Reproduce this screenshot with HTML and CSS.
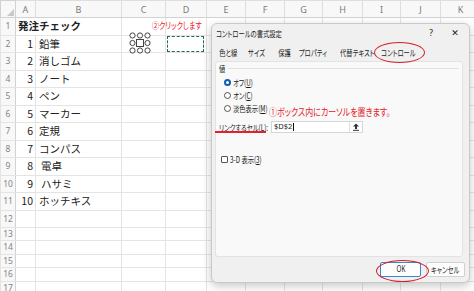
FILE: index.html
```html
<!DOCTYPE html>
<html lang="ja">
<head>
<meta charset="utf-8">
<link rel="stylesheet" href="styles.css">
</head>
<body>
<table class="sheet">
  <colgroup>
    <col class="c-rn"><col class="c-a"><col class="c-b"><col class="c-c"><col class="c-d"><col class="c-e"><col class="c-f"><col class="c-g"><col class="c-h"><col class="c-i"><col class="c-j"><col class="c-k">
  </colgroup>
  <tr class="h0"><td class="corner"><span class="tri"></span></td><td class="hd">A</td><td class="hd">B</td><td class="hd">C</td><td class="hd">D</td><td class="hd">E</td><td class="hd">F</td><td class="hd">G</td><td class="hd">H</td><td class="hd">I</td><td class="hd">J</td><td class="hd">K</td></tr>
  <tr class="r"><td class="rn">1</td><td class="title-cell">発注チェック</td><td class="after-title"></td><td></td><td></td><td></td><td></td><td></td><td></td><td></td><td></td><td></td></tr>
  <tr class="r"><td class="rn">2</td><td class="num">1</td><td class="item">鉛筆</td><td></td><td class="linked"><div class="ants"></div></td><td></td><td></td><td></td><td></td><td></td><td></td><td></td></tr>
  <tr class="r"><td class="rn">3</td><td class="num">2</td><td class="item">消しゴム</td><td></td><td></td><td></td><td></td><td></td><td></td><td></td><td></td><td></td></tr>
  <tr class="r"><td class="rn">4</td><td class="num">3</td><td class="item">ノート</td><td></td><td></td><td></td><td></td><td></td><td></td><td></td><td></td><td></td></tr>
  <tr class="r"><td class="rn">5</td><td class="num">4</td><td class="item">ペン</td><td></td><td></td><td></td><td></td><td></td><td></td><td></td><td></td><td></td></tr>
  <tr class="r"><td class="rn">6</td><td class="num">5</td><td class="item">マーカー</td><td></td><td></td><td></td><td></td><td></td><td></td><td></td><td></td><td></td></tr>
  <tr class="r"><td class="rn">7</td><td class="num">6</td><td class="item">定規</td><td></td><td></td><td></td><td></td><td></td><td></td><td></td><td></td><td></td></tr>
  <tr class="r"><td class="rn">8</td><td class="num">7</td><td class="item">コンパス</td><td></td><td></td><td></td><td></td><td></td><td></td><td></td><td></td><td></td></tr>
  <tr class="r"><td class="rn">9</td><td class="num">8</td><td class="item ind">電卓</td><td></td><td></td><td></td><td></td><td></td><td></td><td></td><td></td><td></td></tr>
  <tr class="r"><td class="rn">10</td><td class="num">9</td><td class="item ind">ハサミ</td><td></td><td></td><td></td><td></td><td></td><td></td><td></td><td></td><td></td></tr>
  <tr class="r"><td class="rn">11</td><td class="num">10</td><td class="item">ホッチキス</td><td></td><td></td><td></td><td></td><td></td><td></td><td></td><td></td><td></td></tr>
  <tr class="r"><td class="rn">12</td><td></td><td></td><td></td><td></td><td></td><td></td><td></td><td></td><td></td><td></td><td></td></tr>
  <tr class="s"><td class="rn">13</td><td></td><td></td><td></td><td></td><td></td><td></td><td></td><td></td><td></td><td></td><td></td></tr>
  <tr class="s"><td class="rn">14</td><td></td><td></td><td></td><td></td><td></td><td></td><td></td><td></td><td></td><td></td><td></td></tr>
  <tr class="s"><td class="rn">15</td><td></td><td></td><td></td><td></td><td></td><td></td><td></td><td></td><td></td><td></td><td></td></tr>
  <tr class="s"><td class="rn">16</td><td></td><td></td><td></td><td></td><td></td><td></td><td></td><td></td><td></td><td></td><td></td></tr>
  <tr class="s"><td class="rn">17</td><td></td><td></td><td></td><td></td><td></td><td></td><td></td><td></td><td></td><td></td><td></td></tr>
</table>

<!-- option button control selected on the sheet -->
<svg class="ctrl" width="22" height="22" viewBox="0 0 22 22">
  <g fill="#fff" stroke="#444" stroke-width="1">
    <circle cx="3.5" cy="3.5" r="2.6"/><circle cx="11" cy="3.5" r="2.6"/><circle cx="18.5" cy="3.5" r="2.6"/>
    <circle cx="3.5" cy="11" r="2.6"/><circle cx="18.5" cy="11" r="2.6"/>
    <circle cx="3.5" cy="18.5" r="2.6"/><circle cx="11" cy="18.5" r="2.6"/><circle cx="18.5" cy="18.5" r="2.6"/>
    <rect x="7.5" y="7.5" width="7" height="7"/>
  </g>
</svg>
<div class="note note2">②クリックします</div>

<div class="dlg">
  <div class="dtitle">
    <span class="dt"><span class="sx">コントロールの書式設定</span></span>
    <span class="q">?</span>
    <span class="x">✕</span>
  </div>
  <div class="tabs">
    <span class="tab t1"><span class="sx c">色と線</span></span>
    <span class="tab t2"><span class="sx c">サイズ</span></span>
    <span class="tab t3"><span class="sx c">保護</span></span>
    <span class="tab t4"><span class="sx c">プロパティ</span></span>
    <span class="tab t5"><span class="sx c">代替テキスト</span></span>
    <span class="tab t6 active"><span class="sx c">コントロール</span></span>
  </div>
  <div class="panel">
    <div class="group"><span class="sx">値</span><span class="gline"></span></div>
    <div class="radios">
      <div class="opt"><span class="radio on"></span><span class="sx">オフ(<u>U</u>)</span></div>
      <div class="opt"><span class="radio"></span><span class="sx">オン(<u>C</u>)</span></div>
      <div class="opt"><span class="radio"></span><span class="sx">淡色表示(<u>M</u>)</span></div>
    </div>
    <div class="link">
      <span class="lbl"><span class="sx">リンクするセル(<u>L</u>):</span></span>
      <span class="inp"><span class="val">$D$2</span><span class="caret"></span><span class="pick"><svg width="8" height="8" viewBox="0 0 8 8"><path d="M4 0.5 L7 3.6 H5 V6 H3 V3.6 H1 Z" fill="#333"/><rect x="1" y="6.8" width="6" height="1" fill="#333"/></svg></span></span>
    </div>
    <div class="chk"><span class="box"></span><span class="sx">3-D 表示(<u>3</u>)</span></div>
  </div>
  <div class="foot">
    <span class="btn ok"><span class="sx c">OK</span></span>
    <span class="btn"><span class="sx c">キャンセル</span></span>
  </div>
</div>

<div class="note note1">①ボックス内にカーソルを置きます。</div>
<div class="redline"></div>
<div class="ring ring-tab"></div>
<div class="ring ring-ok"></div>
</body>
</html>
```

FILE: styles.css
```css
* { box-sizing: border-box; }
body {
  margin: 0;
  width: 474px;
  height: 291px;
  overflow: hidden;
  position: relative;
  background: #fff;
  font-family: "Noto Sans CJK JP", "Noto Sans", sans-serif;
  color: #1f1f1f;
}

/* ---------- sheet ---------- */
.sheet {
  border-collapse: collapse;
  table-layout: fixed;
  width: 480px;
}
.c-rn { width: 15px; }
.c-a { width: 20px; }
.c-b { width: 86px; }
.c-c { width: 44px; }
.c-d { width: 41px; }
.c-e { width: 39px; }
.c-f { width: 39px; }
.c-g { width: 38px; }
.c-h { width: 40px; }
.c-i { width: 38px; }
.c-j { width: 40px; }
.c-k { width: 40px; }

.sheet td {
  border: 1px solid #e4e4e4;
  padding: 0 2px;
  font-size: 10.5px;
  line-height: 1;
  white-space: nowrap;
  overflow: visible;
  color: #222;
}
.h0 { height: 17px; }
.r { height: 17.5px; }
.s { height: 13.4px; }

.sheet .hd {
  background: #f8f8f8;
  color: #7a7a7a;
  font-family: "Noto Sans", sans-serif;
  font-size: 9px;
  text-align: center;
  border-color: #dedede;
  border-bottom-color: #d2d2d2;
}
.sheet .corner {
  background: #f8f8f8;
  border-color: #d2d2d2;
  position: relative;
}
.tri {
  position: absolute;
  right: 1px;
  bottom: 1px;
  width: 0;
  height: 0;
  border-left: 7px solid transparent;
  border-bottom: 7px solid #c8c8c8;
}
.sheet .rn {
  background: #f8f8f8;
  color: #858585;
  font-family: "Noto Sans", sans-serif;
  font-size: 8.5px;
  text-align: center;
  padding: 0;
  border-color: #e4e4e4;
  border-right-color: #d2d2d2;
}
.sheet .title-cell {
  font-weight: 700;
  font-size: 10.5px;
  border-right: hidden;
  padding-left: 2px;
}
.sheet .num {
  text-align: right;
  padding-right: 2px;
}
.sheet .item { padding-left: 3px; }
.sheet .ind { padding-left: 5px; }
.sheet .linked { padding: 0; }
.ants {
  margin: 0 2px 0 1px;
  height: 16px;
  border: 1.5px dashed #1e6e45;
}

/* ---------- sheet overlays ---------- */
.ctrl {
  position: absolute;
  left: 129px;
  top: 32px;
}
.note {
  position: absolute;
  color: #e5202a;
  white-space: nowrap;
  font-feature-settings: "palt";
  line-height: 1;
  transform-origin: 0 50%;
}
.note2 {
  left: 152px;
  top: 21px;
  font-size: 9px;
  transform: scaleX(0.78);
}
.note1 {
  left: 269px;
  top: 107px;
  font-size: 10px;
  transform: scaleX(0.8);
}
.redline {
  position: absolute;
  left: 215px;
  top: 131px;
  width: 51px;
  height: 1.5px;
  background: #e5202a;
}
.ring {
  position: absolute;
  border: 1.5px solid #d41f2c;
  border-radius: 50%;
}
.ring-tab {
  left: 374px;
  top: 42px;
  width: 51px;
  height: 21px;
}
.ring-ok {
  left: 376px;
  top: 260px;
  width: 53px;
  height: 22px;
}

/* ---------- dialog ---------- */
.dlg {
  position: absolute;
  left: 211px;
  top: 23px;
  width: 259px;
  height: 260px;
  background: #f0f0f0;
  border: 1px solid #c9c9c9;
  border-radius: 6px;
  box-shadow: 0 3px 10px rgba(0, 0, 0, 0.22);
  display: flex;
  flex-direction: column;
  font-size: 8.5px;
  font-feature-settings: "palt";
  color: #1b1b1b;
  line-height: 1;
  white-space: nowrap;
}
.sx {
  display: inline-block;
  transform: scaleX(0.74);
  transform-origin: 0 50%;
}
.sx.c { transform-origin: 50% 50%; }
.dtitle {
  height: 19px;
  display: flex;
  align-items: center;
  padding-left: 4px;
}
.dt { flex: 1; }
.q {
  width: 20px;
  text-align: center;
  font-family: "Noto Sans", sans-serif;
  font-size: 8.5px;
}
.x {
  width: 28px;
  text-align: center;
  font-size: 9px;
  font-family: "DejaVu Sans", sans-serif;
}
.tabs {
  height: 18px;
  display: flex;
  align-items: center;
  padding-left: 2px;
}
.tab {
  display: flex;
  justify-content: center;
}
.t1 { width: 28px; }
.t2 { width: 30px; }
.t3 { width: 26px; }
.t4 { width: 30px; }
.t5 { width: 58px; }
.t6 { width: 24px; }

.panel {
  flex: 1;
  margin: 0 6px 0 3px;
  background: #f9f9f9;
  border: 1px solid #e3e3e3;
  border-radius: 3px;
  padding: 2px 3px 0 3px;
  display: flex;
  flex-direction: column;
}
.group {
  display: flex;
  align-items: center;
  gap: 3px;
  height: 8px;
}
.gline {
  flex: 1;
  height: 1px;
  background: #e0e0e0;
  margin-left: -3px;
}
.radios {
  margin: 4px 0 0 5px;
  display: flex;
  flex-direction: column;
}
.opt {
  height: 13px;
  display: flex;
  align-items: center;
  gap: 2px;
}
.radio {
  width: 7px;
  height: 7px;
  border: 1px solid #555;
  border-radius: 50%;
  background: #fff;
  flex: none;
}
.radio.on {
  border: 2px solid #0f5cb8;
  background: #fff;
}
.link {
  margin-top: 6px;
  display: flex;
  align-items: center;
  height: 12px;
}
.lbl { width: 52px; flex: none; }
.inp {
  width: 92px;
  height: 12px;
  background: #fff;
  border: 1px solid #d6d6d6;
  display: flex;
  align-items: center;
  padding-left: 2px;
  font-family: "Noto Sans", sans-serif;
  font-size: 7.5px;
}
.caret {
  width: 1px;
  height: 8px;
  background: #111;
  margin-left: 1px;
}
.pick {
  margin-left: auto;
  width: 13px;
  height: 10px;
  border-left: 1px solid #e0e0e0;
  display: flex;
  align-items: center;
  justify-content: center;
}
.chk {
  margin: 22px 0 0 2px;
  display: flex;
  align-items: center;
  gap: 2px;
}
.box {
  width: 7px;
  height: 7px;
  border: 1px solid #555;
  border-radius: 1px;
  background: #fff;
  flex: none;
}
.foot {
  height: 25px;
  display: flex;
  align-items: center;
  justify-content: flex-end;
  gap: 5px;
  padding-right: 4px;
}
.btn {
  width: 39px;
  height: 15px;
  background: #fdfdfd;
  border: 1px solid #d0d0d0;
  border-radius: 2px;
  display: flex;
  align-items: center;
  justify-content: center;
}
.btn.ok {
  width: 41px;
  border: 1px solid #3b86d0;
  font-family: "Noto Sans", sans-serif;
}
```
